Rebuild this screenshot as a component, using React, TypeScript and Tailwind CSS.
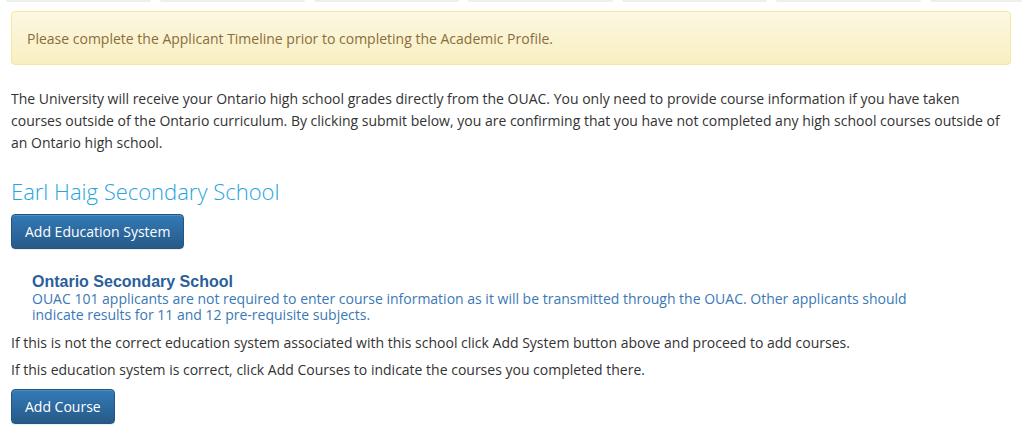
import React from 'react';

const tabs = [0, 1, 2, 3, 4, 5, 6];

function PrimaryButton({ children }: { children: React.ReactNode }) {
  return (
    <button className="rounded-[4px] border border-[#245580] bg-gradient-to-b from-[#337ab7] to-[#265a88] px-[13px] h-[35px] text-[14px] text-white shadow-[inset_0_1px_0_rgba(255,255,255,0.15),0_1px_1px_rgba(0,0,0,0.075)]">
      {children}
    </button>
  );
}

export default function App() {
  return (
    <div className="w-[1022px] h-[436px] overflow-hidden bg-white font-['Open_Sans',sans-serif] text-[14px] text-[#333]">
      {/* bottoms of the tab bar above */}
      <div className="flex gap-[9px] pl-[6px]">
        {tabs.map((t) => (
          <div key={t} className="h-[2px] w-[145px] shrink-0 rounded-b-[3px] bg-[#eeeeee]" />
        ))}
      </div>

      <div className="px-[11px] pt-[9px]">
        {/* Warning alert */}
        <div className="h-[54px] rounded-[4px] border border-[#f5e79e] bg-gradient-to-b from-[#fcf8e3] to-[#f8efc0] px-[15px] flex items-center text-[#8a6d3b] shadow-[0_1px_0_rgba(255,255,255,0.25)]">
          Please complete the Applicant Timeline prior to completing the Academic Profile.
        </div>

        <p className="mt-[23px] leading-[22px] pr-[6px]">
          The University will receive your Ontario high school grades directly from the OUAC. You only need to provide course information if you have taken courses outside of the Ontario curriculum. By clicking submit below, you are confirming that you have not completed any high school courses outside of an Ontario high school.
        </p>

        <h2 className="mt-[22px] text-[22px] leading-[30px] font-light text-[#29a3e0]">Earl Haig Secondary School</h2>

        <div className="mt-[8px]">
          <PrimaryButton>Add Education System</PrimaryButton>
        </div>

        {/* Education system */}
        <div className="mt-[24px] pl-[21px] w-[900px]">
          <h3 className="font-['Liberation_Sans',Arial,sans-serif] font-bold text-[16px] leading-[18px] text-[#2b5f9c]">
            Ontario Secondary School
          </h3>
          <p className="leading-[16px] text-[#3b78b6]">
            OUAC 101 applicants are not required to enter course information as it will be transmitted through the OUAC. Other applicants should indicate results for 11 and 12 pre-requisite subjects.
          </p>
        </div>

        <p className="mt-[10px] leading-[20px]">
          If this is not the correct education system associated with this school click Add System button above and proceed to add courses.
        </p>
        <p className="mt-[7px] leading-[20px]">
          If this education system is correct, click Add Courses to indicate the courses you completed there.
        </p>

        <div className="mt-[9px]">
          <PrimaryButton>Add Course</PrimaryButton>
        </div>
      </div>
    </div>
  );
}
